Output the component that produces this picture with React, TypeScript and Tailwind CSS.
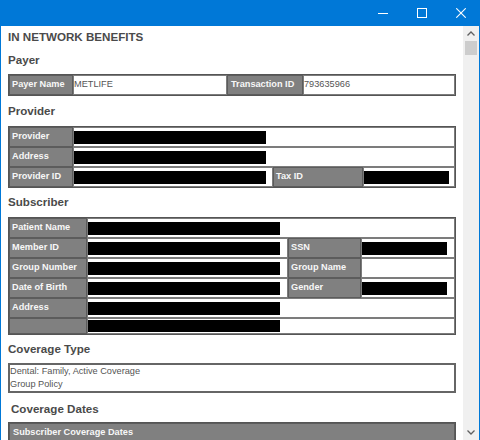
import React from "react";

type P = { className?: string; children?: React.ReactNode };

function Label({ className = "", children }: P) {
  return (
    <div
      className={`h-full shrink-0 border border-[#5c5c5c] bg-[#808080] text-[#f7f7f7] font-bold pl-[2px] flex items-center leading-none whitespace-nowrap ${className}`}
    >
      {children}
    </div>
  );
}

function Value({ className = "", children }: P) {
  return (
    <div
      className={`h-full shrink-0 border border-[#7c7c7c] bg-white text-[#555] flex items-center leading-none whitespace-nowrap ${className}`}
    >
      {children}
    </div>
  );
}

function LongBar() {
  return <div className="w-[192px] h-[13px] bg-black" />;
}
function ShortBar() {
  return <div className="w-[85px] h-[13px] bg-black" />;
}

function Table({ children }: P) {
  return <div className="w-[448px] border border-[#555] flex flex-col text-[9.2px]">{children}</div>;
}

function Row({ className = "h-[20px]", children }: P) {
  return <div className={`flex ${className}`}>{children}</div>;
}

function Heading({ className = "", children }: P) {
  return (
    <div className={`text-[11.6px] leading-[14px] font-bold text-[#4a4a4a] ${className}`}>{children}</div>
  );
}

export default function App() {
  return (
    <div className="w-[480px] h-[440px] flex flex-col overflow-hidden bg-[#0078d7] font-['Liberation_Sans',Arial,sans-serif]">
      {/* title bar */}
      <div className="h-[26px] shrink-0 flex justify-end">
        <div className="w-[39px] h-full flex items-center justify-center">
          <svg width="10" height="10" viewBox="0 0 10 10">
            <line x1="0" y1="5.5" x2="10" y2="5.5" stroke="white" strokeWidth="1" />
          </svg>
        </div>
        <div className="w-[39px] h-full flex items-center justify-center">
          <svg width="10" height="10" viewBox="0 0 10 10">
            <rect x="0.5" y="0.5" width="9" height="9" fill="none" stroke="white" strokeWidth="1" />
          </svg>
        </div>
        <div className="w-[39px] h-full flex items-center justify-center">
          <svg width="10" height="10" viewBox="0 0 10 10">
            <line x1="0.3" y1="0.3" x2="9.7" y2="9.7" stroke="white" strokeWidth="1.1" />
            <line x1="9.7" y1="0.3" x2="0.3" y2="9.7" stroke="white" strokeWidth="1.1" />
          </svg>
        </div>
      </div>

      {/* body */}
      <div className="flex-1 min-h-0 flex mx-[1px]">
        <div className="w-[462px] h-full overflow-hidden bg-white pl-[7px] pt-[4px]">
          <Heading>IN NETWORK BENEFITS</Heading>

          <Heading className="mt-[9px] mb-[7px]">Payer</Heading>
          <Table>
            <Row>
              <Label className="w-[64px]">Payer Name</Label>
              <Value className="w-[154px]">METLIFE</Value>
              <Label className="w-[76px] pl-[3px]">Transaction ID</Label>
              <Value className="w-[152px]">793635966</Value>
            </Row>
          </Table>

          <Heading className="mt-[8px] mb-[8px]">Provider</Heading>
          <Table>
            <Row>
              <Label className="w-[64px]">Provider</Label>
              <Value className="w-[382px]">
                <LongBar />
              </Value>
            </Row>
            <Row>
              <Label className="w-[64px]">Address</Label>
              <Value className="w-[382px]">
                <LongBar />
              </Value>
            </Row>
            <Row>
              <Label className="w-[64px]">Provider ID</Label>
              <Value className="w-[200px]">
                <LongBar />
              </Value>
              <Label className="w-[90px]">Tax ID</Label>
              <Value className="w-[92px]">
                <ShortBar />
              </Value>
            </Row>
          </Table>

          <Heading className="mt-[7px] mb-[8px]">Subscriber</Heading>
          <Table>
            <Row>
              <Label className="w-[78px]">Patient Name</Label>
              <Value className="w-[368px]">
                <LongBar />
              </Value>
            </Row>
            <Row>
              <Label className="w-[78px]">Member ID</Label>
              <Value className="w-[201px]">
                <LongBar />
              </Value>
              <Label className="w-[73px]">SSN</Label>
              <Value className="w-[94px]">
                <ShortBar />
              </Value>
            </Row>
            <Row>
              <Label className="w-[78px]">Group Number</Label>
              <Value className="w-[201px]">
                <LongBar />
              </Value>
              <Label className="w-[73px]">Group Name</Label>
              <Value className="w-[94px]"></Value>
            </Row>
            <Row>
              <Label className="w-[78px]">Date of Birth</Label>
              <Value className="w-[201px]">
                <LongBar />
              </Value>
              <Label className="w-[73px]">Gender</Label>
              <Value className="w-[94px]">
                <ShortBar />
              </Value>
            </Row>
            <Row>
              <Label className="w-[78px]">Address</Label>
              <Value className="w-[368px]">
                <LongBar />
              </Value>
            </Row>
            <Row className="h-[16px]">
              <Label className="w-[78px]"></Label>
              <Value className="w-[368px]">
                <div className="w-[192px] h-[12px] bg-black" />
              </Value>
            </Row>
          </Table>

          <Heading className="mt-[7px] mb-[7px]">Coverage Type</Heading>
          <div className="w-[448px] border-2 border-[#666] text-[9.2px] leading-[13px] text-[#555]">
            <div>Dental: Family, Active Coverage</div>
            <div>Group Policy</div>
          </div>

          <Heading className="mt-[9px] mb-[6px] ml-[3px]">Coverage Dates</Heading>
          <Table>
            <Row>
              <Label className="w-[446px] pl-[3px]">Subscriber Coverage Dates</Label>
            </Row>
            <Row>
              <Label className="w-[120px]"></Label>
              <Value className="w-[326px]"></Value>
            </Row>
          </Table>
        </div>

        {/* scrollbar */}
        <div className="w-[16px] h-full bg-[#f0f0f0] flex flex-col">
          <div className="h-[15px] shrink-0 flex items-center justify-center">
            <svg width="8" height="5" viewBox="0 0 8 5">
              <polyline points="0.5,4.5 4,1 7.5,4.5" fill="none" stroke="#606060" strokeWidth="1.3" />
            </svg>
          </div>
          <div className="h-[14px] mx-[2px] bg-[#cdcdcd]" />
          <div className="flex-1" />
          <div className="h-[15px] shrink-0 flex items-center justify-center">
            <svg width="8" height="5" viewBox="0 0 8 5">
              <polyline points="0.5,0.5 4,4 7.5,0.5" fill="none" stroke="#606060" strokeWidth="1.3" />
            </svg>
          </div>
        </div>
      </div>
    </div>
  );
}
